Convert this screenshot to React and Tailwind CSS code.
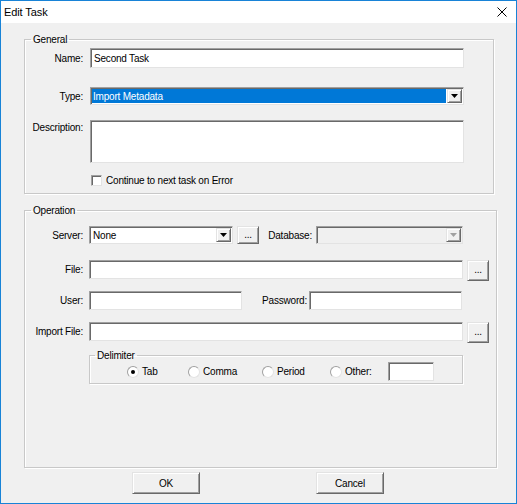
import React from 'react'

// classic Win32 bevels
const sunken =
  'border border-t-[#a0a0a0] border-l-[#a0a0a0] border-r-[#e3e3e3] border-b-[#e3e3e3] shadow-[inset_1px_1px_0_#696969]'
const raised =
  'bg-[#f0f0f0] border border-t-[#e3e3e3] border-l-[#e3e3e3] border-r-[#696969] border-b-[#696969] shadow-[inset_1px_1px_0_#ffffff,inset_-1px_-1px_0_#a0a0a0]'
const group =
  'border border-[#c8c8c8] shadow-[inset_1px_1px_0_#ffffff,1px_1px_0_#ffffff] px-0'

function Arrow({ disabled }) {
  return (
    <svg width="7" height="4" viewBox="0 0 7 4">
      <path d="M0 0h7L3.5 4z" fill={disabled ? '#a0a0a0' : '#000'} />
    </svg>
  )
}

function Combo({ value, width, disabled, selected }) {
  return (
    <div
      className={`${sunken} ${disabled ? 'bg-[#f0f0f0]' : 'bg-white'} h-[18px] p-[1px] flex`}
      style={{ width }}
    >
      <div className="flex-1 flex items-stretch">
        {selected ? (
          <span className="flex-1 mr-[1px] bg-[#0078d7] text-white flex items-center pl-[1px]">
            {value}
          </span>
        ) : (
          <span className="flex items-center pl-[2px]">{value}</span>
        )}
      </div>
      <div className={`${raised} w-[15px] flex items-center justify-center`}>
        <Arrow disabled={disabled} />
      </div>
    </div>
  )
}

function Field({ width, height = 19, children }) {
  return (
    <div
      className={`${sunken} bg-white flex items-center pl-[3px]`}
      style={{ width, height }}
    >
      {children}
    </div>
  )
}

function Browse() {
  return (
    <button className={`${raised} w-[22px] h-[21px] flex items-center justify-center pb-[2px]`}>
      ...
    </button>
  )
}

function Radio({ label, checked, width }) {
  return (
    <label className="flex items-center gap-[3px]" style={{ width }}>
      <span className="w-[12px] h-[12px] rounded-full bg-white border border-t-[#a0a0a0] border-l-[#a0a0a0] border-r-[#e3e3e3] border-b-[#e3e3e3] flex items-center justify-center">
        {checked && <span className="w-[4px] h-[4px] rounded-full bg-black" />}
      </span>
      {label}
    </label>
  )
}

// label column ends at the same x for every row; `gap` is the space before the control
function Row({ label, gap, className = '', children }) {
  return (
    <div className={`flex items-center ${className}`}>
      <span className="w-[58px] text-right shrink-0" style={{ marginRight: gap }}>
        {label}
      </span>
      {children}
    </div>
  )
}

export default function App() {
  return (
    <div className="w-[517px] h-[504px] border border-[#1883d7] bg-[#f0f0f0] flex flex-col font-['Liberation_Sans',Arial,sans-serif] text-[10px] leading-[13px] tracking-[-0.2px] text-black">
      {/* title bar */}
      <div className="h-[22px] bg-white flex items-center justify-between pl-[3px] pr-[9px] text-[11px] tracking-[-0.1px]">
        <span>Edit Task</span>
        <svg width="10" height="10" viewBox="0 0 10 10">
          <path d="M0.5 0.5l9 9M9.5 0.5l-9 9" stroke="#000" strokeWidth="1" />
        </svg>
      </div>

      <div className="flex flex-col pl-[23px]">
        {/* General */}
        <fieldset className={`${group} w-[470px] mt-[10px]`}>
          <legend className="ml-[6px] px-[2px] leading-[13px]">General</legend>
          <div className="flex flex-col pt-[2px] pb-[6px]">
            <Row label="Name:" gap={7}>
              <Field width={374} height={20}>Second Task</Field>
            </Row>
            <Row label="Type:" gap={7} className="mt-[19px]">
              <Combo value="Import Metadata" width={374} selected />
            </Row>
            <div className="flex items-start mt-[15px]">
              <span className="w-[58px] text-right shrink-0 mr-[7px] pt-[1px]">Description:</span>
              <div className={`${sunken} bg-white w-[374px] h-[43px]`} />
            </div>
            <div className="flex items-center ml-[66px] mt-[11px] gap-[4px]">
              <span className={`${sunken} bg-white w-[11px] h-[11px]`} />
              <span>Continue to next task on Error</span>
            </div>
          </div>
        </fieldset>

        {/* Operation */}
        <fieldset className={`${group} w-[473px] mt-[10px]`}>
          <legend className="ml-[6px] px-[2px] leading-[13px]">Operation</legend>
          <div className="flex flex-col pt-[9px] pb-[83px]">
            <Row label="Server:" gap={6}>
              <Combo value="None" width={144} />
              <button className={`${raised} w-[22px] h-[18px] ml-[4px] flex items-center justify-center pb-[2px]`}>
                ...
              </button>
              <span className="w-[53px] text-right">Database:</span>
              <div className="ml-[4px]">
                <Combo value="" width={147} disabled />
              </div>
            </Row>
            <div className="flex items-start mt-[16px]">
              <span className="w-[58px] text-right shrink-0 mr-[6px] pt-[3px]">File:</span>
              <Field width={374} />
              <div className="ml-[4px]">
                <Browse />
              </div>
            </div>
            <Row label="User:" gap={6} className="mt-[10px]">
              <Field width={153} />
              <span className="w-[65px] text-right">Password:</span>
              <div className="ml-[2px]">
                <Field width={153} />
              </div>
            </Row>
            <div className="flex items-start mt-[12px]">
              <span className="w-[58px] text-right shrink-0 mr-[6px] pt-[3px]">Import File:</span>
              <Field width={374} />
              <div className="ml-[4px]">
                <Browse />
              </div>
            </div>

            {/* Delimiter */}
            <fieldset className={`${group} w-[374px] ml-[64px] mt-[7px]`}>
              <legend className="ml-[5px] px-[2px] leading-[11px]">Delimiter</legend>
              <div className="flex items-center pl-[37px] pt-[1px] pb-[2px] h-[22px]">
                <Radio label="Tab" checked width={61} />
                <Radio label="Comma" width={74} />
                <Radio label="Period" width={68} />
                <Radio label="Other:" width={58} />
                <Field width={46} />
              </div>
            </fieldset>
          </div>
        </fieldset>

        {/* dialog buttons */}
        <div className="flex mt-[4px] ml-[108px] gap-[116px]">
          <button className={`${raised} w-[68px] h-[22px] flex items-center justify-center`}>OK</button>
          <button className={`${raised} w-[68px] h-[22px] flex items-center justify-center`}>Cancel</button>
        </div>
      </div>
    </div>
  )
}
